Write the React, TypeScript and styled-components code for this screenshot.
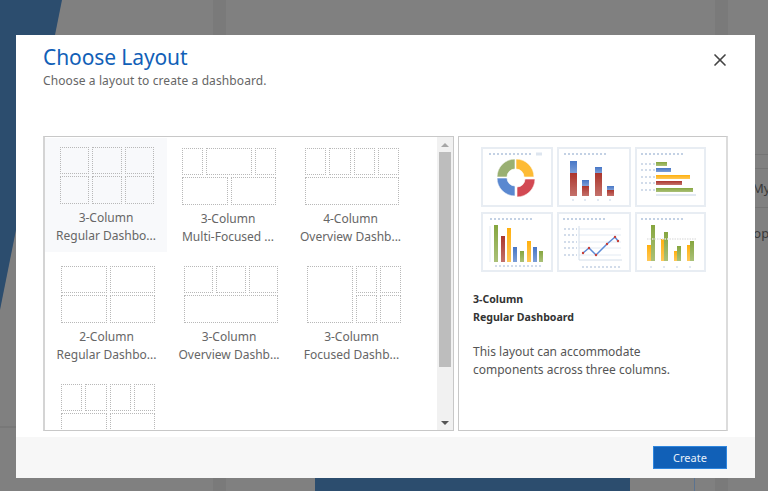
import React from "react";
import styled, { createGlobalStyle } from "styled-components";
import { X } from "lucide-react";

const FONT = `"Noto Sans", "Open Sans", "Liberation Sans", sans-serif`;
const Global = createGlobalStyle`
  html, body { margin: 0; padding: 0; height: 100%; background: #808080; overflow: hidden; font-family: ${FONT}; }
  * { box-sizing: border-box; }
`;

const Backdrop = styled.div`
  display: flex; width: 768px; height: 491px; background: #808080; overflow: hidden;
`;
const LeftPane = styled.div`
  width: 213px; flex: none; height: 100%; display: flex; flex-direction: column; position: relative;
`;
const BlueWedge = styled.div`
  position: absolute; left: 0; top: 0; width: 62px; height: 310px;
  background: #2c4d6e; clip-path: polygon(0 0, 100% 0, 0 100%);
`;
const LeftRule = styled.div`
  margin-top: 426px; height: 2px; width: 16px; background: #787878;
`;
const Band = styled.div`
  width: 13px; height: 100%; background: #7a7a7a; flex: none;
`;
const CenterPane = styled.div`
  width: 489px; flex: none; height: 100%; display: flex; flex-direction: column; justify-content: flex-end;
`;
const BottomStrip = styled.div`
  display: flex; height: 13px;
`;
const BottomBlue = styled.div`
  margin-left: 89px; width: 315px; background: #2c4d6e;
`;
const BottomTick = styled.div`
  margin-left: 64px; width: 1px; background: #5b7390;
`;
const RightPane = styled.div`
  flex: 1; min-width: 0; height: 100%; display: flex; flex-direction: column; padding-top: 154px;
`;
const RightRow = styled.div<{ $h: number; $indent: number }>`
  height: ${p => p.$h}px; border-top: 1px solid #747474; padding-left: ${p => p.$indent}px;
  font-size: 13px; color: #3a3a3a; display: flex; align-items: center; white-space: nowrap; overflow: hidden;
`;

const Modal = styled.div`
  position: fixed; left: 16px; top: 35px; width: 739px; height: 443px;
  background: #fff; display: flex; flex-direction: column;
`;
const Header = styled.header`
  height: 101px; padding: 7px 25px 0 27px; display: flex; justify-content: space-between; align-items: flex-start; flex: none;
`;
const Title = styled.h1`
  margin: 0; font-size: 21px; line-height: 30px; font-weight: 400; color: #1160b7; letter-spacing: -0.1px;
`;
const Subtitle = styled.p`
  margin: 1px 0 0; font-size: 12px; line-height: 16px; color: #666; letter-spacing: 0.1px;
`;
const CloseButton = styled.button`
  border: 0; padding: 0; background: none; color: #444; width: 20px; height: 20px; margin: 8px 0 0; display: block;
`;
const Body = styled.div`
  height: 295px; padding: 0 27px; display: flex; gap: 4px; flex: none;
`;
const ListPanel = styled.div`
  width: 411px; height: 100%; display: flex;
  border: 1px solid #c8c8c8; border-left: 2px solid #d4d4d4;
`;
const TileArea = styled.div`
  flex: 1; min-width: 0; height: 100%; overflow: hidden; display: grid;
  grid-template-columns: repeat(3, 122px); grid-auto-rows: 118px; padding-top: 1px; align-content: start;
`;
const Tile = styled.div<{ $selected?: boolean; $dx: number }>`
  height: 114px; padding: ${p => (p.$selected ? "9px" : "10px")} 0 0 ${p => 15 + p.$dx}px;
  background: ${p => (p.$selected ? "#f8f9fb" : "transparent")};
`;
const Thumb = styled.div`
  width: 94px; height: 57px; display: grid; grid-template-columns: repeat(12, 1fr);
  grid-template-rows: 27px 28px; column-gap: 3px; row-gap: 2px;
`;
const Slot = styled.div<{ $span: number; $rows?: number }>`
  grid-column: span ${p => p.$span}; grid-row: span ${p => p.$rows ?? 1};
  border: 1px dotted #b8b8b8;
`;
const TileLabel = styled.div`
  margin: 5px 0 0 -15px; text-align: center; font-size: 12px; line-height: 18px; color: #666; white-space: nowrap;
`;
const Scrollbar = styled.div`
  width: 16px; flex: none; background: #f1f1f1; display: flex; flex-direction: column; align-items: center;
`;
const ArrowCell = styled.div`
  height: 15px; display: flex; align-items: center; justify-content: center; flex: none;
`;
const Arrow = styled.div<{ $down?: boolean }>`
  width: 0; height: 0; border-left: 4px solid transparent; border-right: 4px solid transparent;
  ${p => (p.$down ? "border-top: 4px solid #555;" : "border-bottom: 4px solid #a6a6a6;")}
`;
const ScrollThumb = styled.div`
  width: 12px; height: 215px; background: #bdbdbd; flex: none;
`;
const ScrollRest = styled.div` flex: 1; `;

const PreviewPanel = styled.aside`
  width: 270px; height: 100%; border: 1px solid #c8c8c8; border-right: 2px solid #dcdcdc;
  padding: 10px 0 0 14px;
`;
const ChartGrid = styled.div`
  margin-left: 8px; display: grid; grid-template-columns: 72px 74px 71px; grid-template-rows: 60px 60px; column-gap: 4px; row-gap: 5px;
`;
const Frame = styled.div`
  border: 2px solid #e8edf3; background: #fff;
  svg { display: block; width: 100%; height: 100%; }
`;
const PreviewName = styled.div`
  margin-top: 18px; font-size: 10.6px; line-height: 18px; font-weight: 700; color: #333;
`;
const PreviewText = styled.p`
  margin: 17px 0 0; width: 240px; font-size: 12px; line-height: 17.5px; color: #555;
`;
const Footer = styled.footer`
  margin-top: 6px; flex: 1; background: #f7f7f7; display: flex; align-items: flex-start; justify-content: flex-end;
  padding: 9px 28px 0 0;
`;
const CreateButton = styled.button`
  width: 74px; height: 23px; background: #1160b7; border: 1px solid #2f86de; color: #e8f0fa;
  font-family: ${FONT}; font-size: 11px; padding: 0; line-height: 1;
`;

type Cell = { s: number; r?: number };
const c = (s: number, r?: number): Cell => ({ s, r });
const layouts: { a?: string; b?: string; dx: number; cells: Cell[] }[] = [
  { a: "3-Column", b: "Regular Dashbo...", dx: 0, cells: [c(4), c(4), c(4), c(4), c(4), c(4)] },
  { a: "3-Column", b: "Multi-Focused ...", dx: 0, cells: [c(3), c(6), c(3), c(6), c(6)] },
  { a: "4-Column", b: "Overview Dashb...", dx: 1, cells: [c(3), c(3), c(3), c(3), c(12)] },
  { a: "2-Column", b: "Regular Dashbo...", dx: 1, cells: [c(6), c(6), c(6), c(6)] },
  { a: "3-Column", b: "Overview Dashb...", dx: 2, cells: [c(4), c(4), c(4), c(12)] },
  { a: "3-Column", b: "Focused Dashb...", dx: 3, cells: [c(6, 2), c(3), c(3), c(3), c(3)] },
  { dx: 1, cells: [c(3), c(3), c(3), c(3), c(6), c(6)] },
];

const COL = { g: "#86a63f", r: "#ab352c", y: "#ffb00f", b: "#4676c6" };
const DOT = "#c3d1e4";
const FadeId = React.createContext("");

function Dots({ x1, x2, y, w = 2 }: { x1: number; x2: number; y: number; w?: number }) {
  return <line x1={x1} x2={x2} y1={y} y2={y} stroke={DOT} strokeWidth={w} strokeDasharray="2 2" />;
}
function Bar({ x, y, w, h, f }: { x: number; y: number; w: number; h: number; f: string }) {
  const fade = React.useContext(FadeId);
  return (
    <g>
      <rect x={x} y={y} width={w} height={h} fill={f} />
      <rect x={x} y={y} width={w} height={h} fill={`url(#${fade})`} />
    </g>
  );
}
function Chart({ x, y, w, h, children }: { x: number; y: number; w: number; h: number; children: React.ReactNode }) {
  const id = React.useId();
  const fade = `${id}fade`;
  return (
    <Frame>
      <svg viewBox={`${x + 2} ${y + 2} ${w - 4} ${h - 4}`}>
        <defs>
          <filter id={id} x="-10%" y="-10%" width="120%" height="120%">
            <feGaussianBlur stdDeviation="0.55" />
          </filter>
          <linearGradient id={fade} x1="0" y1="0" x2="0" y2="1">
            <stop offset="0" stopColor="#fff" stopOpacity="0" />
            <stop offset="1" stopColor="#fff" stopOpacity="0.3" />
          </linearGradient>
        </defs>
        <FadeId.Provider value={fade}>
          <g filter={`url(#${id})`}>{children}</g>
        </FadeId.Provider>
      </svg>
    </Frame>
  );
}
function sector(cx: number, cy: number, a0: number, a1: number, R = 18, r = 8) {
  const p = (rad: number, a: number) => {
    const t = (a * Math.PI) / 180;
    return `${(cx + rad * Math.cos(t)).toFixed(2)} ${(cy + rad * Math.sin(t)).toFixed(2)}`;
  };
  return `M${p(R, a0)}A${R} ${R} 0 0 1 ${p(R, a1)}L${p(r, a1)}A${r} ${r} 0 0 0 ${p(r, a0)}Z`;
}

function Charts() {
  const lp: [number, number][] = [[583, 253], [589, 248], [596, 255], [607, 244], [615, 237], [618, 241]];
  return (
    <ChartGrid>
      <Chart x={481} y={147} w={72} h={60}>
        <Dots x1={489} x2={532} y={154} />
        <rect x={536} y={152.5} width={6} height={3} fill="#dde5ef" />
        <path d={sector(515, 177, 180, 270)} fill="#9ab072" stroke="#fff" strokeWidth={0.6} />
        <path d={sector(516, 177, 270, 360)} fill="#fdbb35" stroke="#fff" strokeWidth={0.6} />
        <path d={sector(515, 178, 90, 180)} fill="#5a88d0" stroke="#fff" strokeWidth={0.6} />
        <path d={sector(517, 179, 0, 90)} fill="#d24a52" stroke="#fff" strokeWidth={0.6} />
      </Chart>
      <Chart x={557} y={147} w={74} h={60}>
        <Dots x1={564} x2={607} y={154} />
        {[[570, 161], [582, 180], [595, 167], [607, 186]].map(([x, y], i) => (
          <Bar key={i} x={x} y={y} w={7} h={[173, 186, 173, 190][i] - y} f="#4676c6" />
        ))}
        {[[570, 173], [582, 186], [595, 173], [607, 190]].map(([x, y], i) => (
          <Bar key={i} x={x} y={y} w={7} h={196 - y} f="#ab352c" />
        ))}
        {[573, 585, 598, 610].map(x => <line key={x} x1={x} x2={x} y1={199} y2={201} stroke={DOT} />)}
      </Chart>
      <Chart x={635} y={147} w={71} h={60}>
        <Dots x1={641} x2={684} y={154} />
        {[164, 170, 177, 183, 190].map(y => <Dots key={y} x1={641} x2={655} y={y} w={1.5} />)}
        <Bar x={656} y={162} w={11} h={4} f={COL.g} />
        <Bar x={656} y={168} w={15} h={4} f={COL.b} />
        <Bar x={656} y={175} w={34} h={4} f={COL.y} />
        <Bar x={656} y={181} w={26} h={4} f={COL.r} />
        <Bar x={656} y={188} w={37} h={4} f={COL.g} />
        <line x1={656} x2={696} y1={195} y2={195} stroke={DOT} />
      </Chart>
      <Chart x={481} y={212} w={72} h={60}>
        <Dots x1={490} x2={533} y={219} />
        <line x1={490} x2={490} y1={226} y2={262} stroke="#e4ebf3" />
        {([[494, 225, COL.g], [501, 236, COL.r], [507, 228, COL.y], [513, 247, COL.b], [520, 251, COL.g], [527, 241, COL.y], [533, 247, COL.b], [539, 251, COL.g]] as [number, number, string][]).map(([x, y, f]) => (
          <Bar key={x} x={x} y={y} w={4} h={262 - y} f={f} />
        ))}
        <Dots x1={495} x2={542} y={266} w={1.5} />
      </Chart>
      <Chart x={557} y={212} w={74} h={60}>
        <Dots x1={563} x2={607} y={219} />
        {[229, 235, 242, 248, 255].map(y => (
          <g key={y}>
            <line x1={579} x2={621} y1={y} y2={y} stroke="#e4ebf3" />
            <Dots x1={564} x2={577} y={y} w={1.5} />
          </g>
        ))}
        <line x1={579} x2={579} y1={226} y2={260} stroke="#d3deea" />
        <line x1={579} x2={622} y1={260} y2={260} stroke="#d3deea" />
        <polyline points={lp.map(p => p.join(",")).join(" ")} fill="none" stroke="#5d8bd6" strokeWidth={1.5} />
        {lp.map(([x, y]) => <circle key={x} cx={x} cy={y} r={1.2} fill="#c8403a" />)}
        <Dots x1={582} x2={622} y={267} w={1.5} />
      </Chart>
      <Chart x={635} y={212} w={71} h={60}>
        <Dots x1={641} x2={684} y={219} />
        {([[647, 245], [661, 239], [674, 251], [687, 245]] as [number, number][]).map(([x, y]) => (
          <Bar key={x} x={x} y={y} w={4} h={261 - y} f={COL.y} />
        ))}
        {([[651, 225], [664, 232], [677, 246], [690, 241]] as [number, number][]).map(([x, y]) => (
          <Bar key={x} x={x} y={y} w={4} h={261 - y} f={COL.g} />
        ))}
        <line x1={647} x2={696} y1={239} y2={239} stroke="#e3e3e3" strokeWidth={1.5} strokeDasharray="1.5 1" />
        {[651, 664, 677, 690].map(x => <line key={x} x1={x} x2={x} y1={266} y2={268} stroke={DOT} />)}
      </Chart>
    </ChartGrid>
  );
}

export default function App() {
  return (
    <>
      <Global />
      <Backdrop>
        <LeftPane>
          <BlueWedge />
          <LeftRule />
        </LeftPane>
        <Band />
        <CenterPane>
          <BottomStrip>
            <BottomBlue />
            <BottomTick />
          </BottomStrip>
        </CenterPane>
        <Band />
        <RightPane>
          <RightRow $h={14} $indent={25} />
          <RightRow $h={39} $indent={24}>My</RightRow>
          <RightRow $h={50} $indent={19}>Top</RightRow>
        </RightPane>
      </Backdrop>
      <Modal>
        <Header>
          <div>
            <Title>Choose Layout</Title>
            <Subtitle>Choose a layout to create a dashboard.</Subtitle>
          </div>
          <CloseButton aria-label="Close"><X size={20} strokeWidth={2} /></CloseButton>
        </Header>
        <Body>
          <ListPanel>
            <TileArea>
              {layouts.map((l, i) => (
                <Tile key={i} $selected={i === 0} $dx={l.dx}>
                  <Thumb>
                    {l.cells.map((cell, j) => <Slot key={j} $span={cell.s} $rows={cell.r} />)}
                  </Thumb>
                  {l.a && <TileLabel>{l.a}<br />{l.b}</TileLabel>}
                </Tile>
              ))}
            </TileArea>
            <Scrollbar>
              <ArrowCell><Arrow /></ArrowCell>
              <ScrollThumb />
              <ScrollRest />
              <ArrowCell><Arrow $down /></ArrowCell>
            </Scrollbar>
          </ListPanel>
          <PreviewPanel>
            <Charts />
            <PreviewName>3-Column<br />Regular Dashboard</PreviewName>
            <PreviewText>This layout can accommodate components across three columns.</PreviewText>
          </PreviewPanel>
        </Body>
        <Footer>
          <CreateButton>Create</CreateButton>
        </Footer>
      </Modal>
    </>
  );
}
